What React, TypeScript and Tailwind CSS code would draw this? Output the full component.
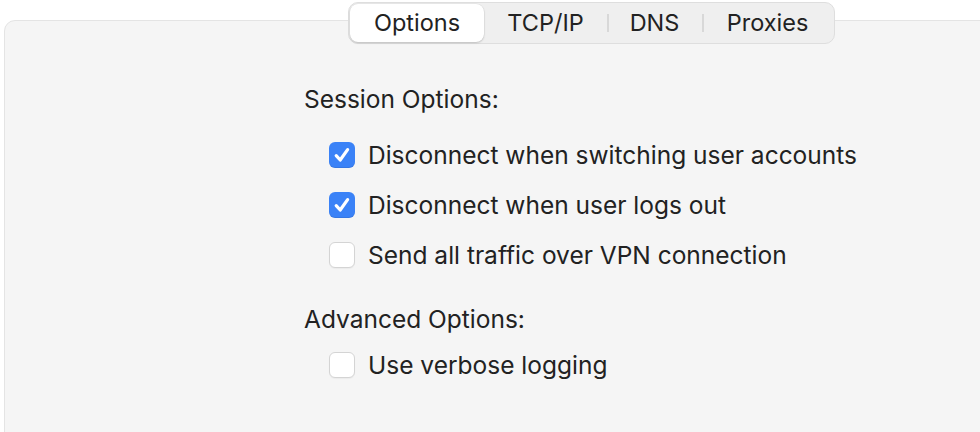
import React from 'react'

type Option = { label: string; checked: boolean }

const sessionOptions: Option[] = [
  { label: 'Disconnect when switching user accounts', checked: true },
  { label: 'Disconnect when user logs out', checked: true },
  { label: 'Send all traffic over VPN connection', checked: false },
]

const advancedOptions: Option[] = [{ label: 'Use verbose logging', checked: false }]

const tabs = [
  { name: 'Options', width: 'w-[134px]' },
  { name: 'TCP/IP', width: 'w-[123px]' },
  { name: 'DNS', width: 'w-[95px]' },
  { name: 'Proxies', width: 'w-[131px]' },
]

function Checkbox({ checked }: { checked: boolean }) {
  if (checked) {
    return (
      <div className="flex h-[26px] w-[26px] shrink-0 items-center justify-center rounded-[6px] bg-[#3a82f7] shadow-[inset_0_-1px_0_rgba(0,0,0,0.08)]">
        <svg width="20" height="20" viewBox="0 0 20 20" fill="none">
          <path d="M4.2 10.6 L8.2 15 L15.6 4.6" stroke="white" strokeWidth="3.2" strokeLinecap="round" strokeLinejoin="round" />
        </svg>
      </div>
    )
  }
  return <div className="h-[26px] w-[26px] shrink-0 rounded-[6px] border border-[#d4d4d4] bg-white shadow-[0_1px_1px_rgba(0,0,0,0.04)]" />
}

function Row({ option }: { option: Option }) {
  return (
    <div className="flex h-[50px] items-center gap-[13px] pl-[25px]">
      <Checkbox checked={option.checked} />
      <span className="text-[24.5px] text-[#222]">{option.label}</span>
    </div>
  )
}

export default function App() {
  return (
    <div className="h-[432px] w-[980px] overflow-hidden bg-white" style={{ fontFamily: 'Inter, "Noto Sans", sans-serif' }}>
      <div className="ml-[4px] mt-[20px] h-[460px] w-[1200px] rounded-[11px] border border-[#e4e4e4] bg-[#f5f5f5]">
        <div className="-mt-[19px] ml-[343px] flex h-[42px] w-[487px] items-center rounded-[10px] border border-[#dedede] bg-[#efefef] px-[1px]">
          {tabs.map((t, i) => (
            <div key={t.name} className={`relative flex h-[38px] items-center justify-center ${t.width}`}>
              {i === 0 ? (
                <div className="absolute inset-0 rounded-[8px] bg-white shadow-[0_1px_2px_rgba(0,0,0,0.18),0_0_0_0.5px_rgba(0,0,0,0.06)]" />
              ) : null}
              {i >= 2 ? <div className="absolute left-0 top-[10px] h-[18px] w-[2px] bg-[#d8d8d8]" /> : null}
              <span className="relative text-[23.5px] text-[#222]">{t.name}</span>
            </div>
          ))}
        </div>

        <div className="ml-[299px] mt-[40px] flex flex-col">
          <div className="h-[30px] text-[24.5px] leading-[30px] text-[#222]">Session Options:</div>
          <div className="mt-[16px] flex flex-col">
            {sessionOptions.map((o) => (
              <Row key={o.label} option={o} />
            ))}
          </div>
          <div className="mt-[24px] h-[30px] text-[24.5px] leading-[30px] text-[#222]">Advanced Options:</div>
          <div className="mt-[6px] flex flex-col">
            {advancedOptions.map((o) => (
              <Row key={o.label} option={o} />
            ))}
          </div>
        </div>
      </div>
    </div>
  )
}
